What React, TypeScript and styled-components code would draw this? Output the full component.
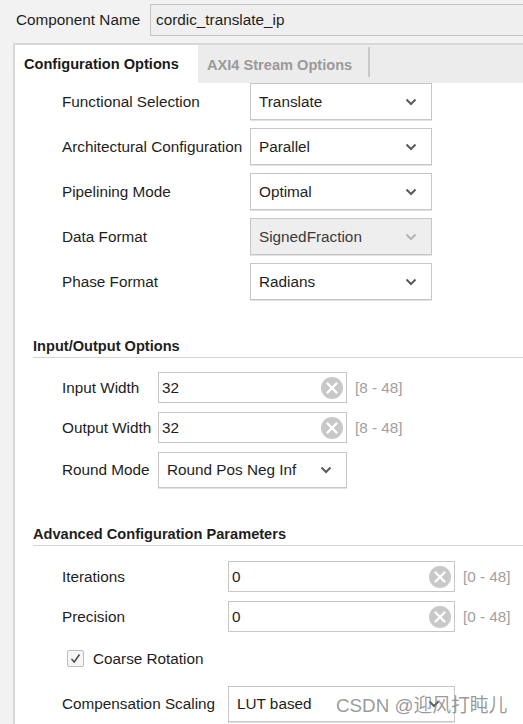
import styled, { createGlobalStyle } from 'styled-components';

const GlobalStyle = createGlobalStyle`
  html, body {
    margin: 0;
    padding: 0;
    background: #f2f2f2;
    overflow: hidden;
  }
  body {
    font-family: "Liberation Sans", Arial, sans-serif;
    font-size: 15.3px;
    color: #1e1e1e;
  }
`;

const Chevron = ({ disabled }: { disabled?: boolean }) => (
  <svg width="12" height="8" viewBox="0 0 12 8">
    <path
      d="M1.5 1.5 L6 6 L10.5 1.5"
      fill="none"
      stroke={disabled ? '#b4b4b4' : '#5a5a5a'}
      strokeWidth="2"
    />
  </svg>
);

const ClearIcon = () => (
  <svg width="22" height="22" viewBox="0 0 22 22">
    <circle cx="11" cy="11" r="11" fill="#c8c8c8" />
    <path d="M6.5 6.5 L15.5 15.5 M15.5 6.5 L6.5 15.5" stroke="#fff" strokeWidth="2.4" strokeLinecap="round" />
  </svg>
);

interface SelectProps {
  value: string;
  width: number;
  height?: number;
  disabled?: boolean;
}

const Select: React.FC<SelectProps> = ({ value, width, height = 37, disabled }) => (
  <SelectBox $width={width} $height={height} $disabled={disabled}>
    <span>{value}</span>
    <Chevron disabled={disabled} />
  </SelectBox>
);

interface FieldProps {
  value: string;
  width: number;
  range: string;
}

const NumberField: React.FC<FieldProps> = ({ value, width, range }) => (
  <>
    <InputBox $width={width}>
      <span>{value}</span>
      <ClearIcon />
    </InputBox>
    <Range>{range}</Range>
  </>
);

const mainRows = [
  { label: 'Functional Selection', value: 'Translate' },
  { label: 'Architectural Configuration', value: 'Parallel' },
  { label: 'Pipelining Mode', value: 'Optimal' },
  { label: 'Data Format', value: 'SignedFraction', disabled: true },
  { label: 'Phase Format', value: 'Radians' },
];

const App: React.FC = () => (
  <Page>
    <GlobalStyle />
    <NameRow>
      <NameLabel>Component Name</NameLabel>
      <NameInput>cordic_translate_ip</NameInput>
    </NameRow>
    <Panel>
      <Tabs>
        <Tab $active>Configuration Options</Tab>
        <Tab>AXI4 Stream Options</Tab>
      </Tabs>
      <Body>
        <Rows $gap={8}>
          {mainRows.map((r) => (
            <Row key={r.label}>
              <Label $width={188}>{r.label}</Label>
              <Select value={r.value} width={182} disabled={r.disabled} />
            </Row>
          ))}
        </Rows>

        <SectionTitle>Input/Output Options</SectionTitle>
        <Rows $gap={9} $top={14}>
          <Row>
            <Label $width={96}>Input Width</Label>
            <NumberField value="32" width={189} range="[8 - 48]" />
          </Row>
          <Row>
            <Label $width={96}>Output Width</Label>
            <NumberField value="32" width={189} range="[8 - 48]" />
          </Row>
          <Row>
            <Label $width={96}>Round Mode</Label>
            <Select value="Round Pos Neg Inf" width={189} height={36} />
          </Row>
        </Rows>

        <SectionTitle>Advanced Configuration Parameters</SectionTitle>
        <Rows $gap={9} $top={15}>
          <Row>
            <Label $width={166}>Iterations</Label>
            <NumberField value="0" width={227} range="[0 - 48]" />
          </Row>
          <Row>
            <Label $width={166}>Precision</Label>
            <NumberField value="0" width={227} range="[0 - 48]" />
          </Row>
        </Rows>
        <CheckRow>
          <CheckBox>
            <svg width="13" height="13" viewBox="0 0 13 13">
              <path d="M2.5 7 L5.2 10 L10.5 2.5" fill="none" stroke="#4a4a4a" strokeWidth="1.5" />
            </svg>
          </CheckBox>
          <span>Coarse Rotation</span>
        </CheckRow>
        <Rows $top={19}>
          <Row>
            <Label $width={166}>Compensation Scaling</Label>
            <Select value="LUT based" width={227} height={36} />
          </Row>
        </Rows>
      </Body>
    </Panel>
    <Watermark>CSDN @迎风打盹儿</Watermark>
  </Page>
);

const Page = styled.div`
  position: relative;
  width: 523px;
  height: 724px;
  overflow: hidden;
`;

const NameRow = styled.div`
  display: flex;
  align-items: center;
  height: 32px;
  padding: 4px 0 7px 16px;
`;

const NameLabel = styled.div`
  width: 134px;
  flex-shrink: 0;
  white-space: nowrap;
`;

const NameInput = styled.div`
  flex: 1;
  height: 30px;
  margin-right: -20px;
  display: flex;
  align-items: center;
  padding-left: 5px;
  background: #efefef;
  border: 1px solid #c4c4c4;
`;

const Panel = styled.div`
  margin-left: 13px;
  margin-right: -20px;
  border-top: 2px solid #d8d8d8;
  border-left: 2px solid #d8d8d8;
  background: #fff;
  height: 700px;
`;

const Tabs = styled.div`
  display: flex;
  height: 38px;
  background: #ececec;
`;

const Tab = styled.div<{ $active?: boolean }>`
  display: flex;
  align-items: center;
  font-weight: bold;
  font-size: 14.6px;
  white-space: nowrap;
  height: ${({ $active }) => ($active ? '38px' : '30px')};
  margin-top: ${({ $active }) => ($active ? '0' : '2px')};
  background: ${({ $active }) => ($active ? '#fff' : 'transparent')};
  color: ${({ $active }) => ($active ? '#1a1a1a' : '#9a9a9a')};
  padding: ${({ $active }) => ($active ? '0 0 0 9px' : '0 16px 0 9px')};
  width: ${({ $active }) => ($active ? '183px' : 'auto')};
  box-sizing: border-box;
  border-right: ${({ $active }) => ($active ? 'none' : '2px solid #c8c8c8')};
  padding-top: ${({ $active }) => ($active ? '0' : '6px')};
`;

const Body = styled.div`
  padding-left: 18px;
`;

const Rows = styled.div<{ $gap?: number; $top?: number }>`
  display: flex;
  flex-direction: column;
  gap: ${({ $gap }) => $gap ?? 0}px;
  margin-top: ${({ $top }) => $top ?? 0}px;
`;

const Row = styled.div`
  display: flex;
  align-items: center;
  padding-left: 29px;
`;

const Label = styled.div<{ $width: number }>`
  width: ${({ $width }) => $width}px;
  flex-shrink: 0;
  white-space: nowrap;
`;

const SelectBox = styled.div<{ $width: number; $height: number; $disabled?: boolean }>`
  box-sizing: border-box;
  width: ${({ $width }) => $width}px;
  height: ${({ $height }) => $height}px;
  display: flex;
  align-items: center;
  justify-content: space-between;
  padding: 0 14px 0 8px;
  border: 1px solid #c6c6c6;
  box-shadow: 0 1px 0 #e2e2e2;
  background: ${({ $disabled }) => ($disabled ? '#eeeeee' : '#fff')};
  color: ${({ $disabled }) => ($disabled ? '#3a3a3a' : '#1e1e1e')};
  white-space: nowrap;
`;

const InputBox = styled.div<{ $width: number }>`
  box-sizing: border-box;
  width: ${({ $width }) => $width}px;
  height: 31px;
  display: flex;
  align-items: center;
  justify-content: space-between;
  padding: 0 3px 0 3px;
  border: 1px solid #c6c6c6;
  background: #fff;
`;

const Range = styled.span`
  margin-left: 8px;
  color: #a0a0a0;
  white-space: nowrap;
`;

const SectionTitle = styled.div`
  margin-top: 35px;
  height: 22px;
  line-height: 22px;
  font-size: 14.6px;
  font-weight: bold;
  border-bottom: 1px solid #d4d4d4;
`;

const CheckRow = styled.div`
  display: flex;
  align-items: center;
  gap: 9px;
  margin-top: 18px;
  padding-left: 34px;
  height: 17px;
`;

const CheckBox = styled.div`
  box-sizing: border-box;
  width: 17px;
  height: 17px;
  border: 1px solid #bdbdbd;
  border-radius: 2px;
  background: #f6f6f6;
  display: flex;
  align-items: center;
  justify-content: center;
`;

const Watermark = styled.div`
  position: absolute;
  left: 336px;
  top: 690px;
  font-family: "Liberation Sans", "Noto Sans CJK SC", sans-serif;
  font-size: 18.8px;
  color: rgba(120, 120, 120, 0.75);
  white-space: nowrap;
`;

export default App;
